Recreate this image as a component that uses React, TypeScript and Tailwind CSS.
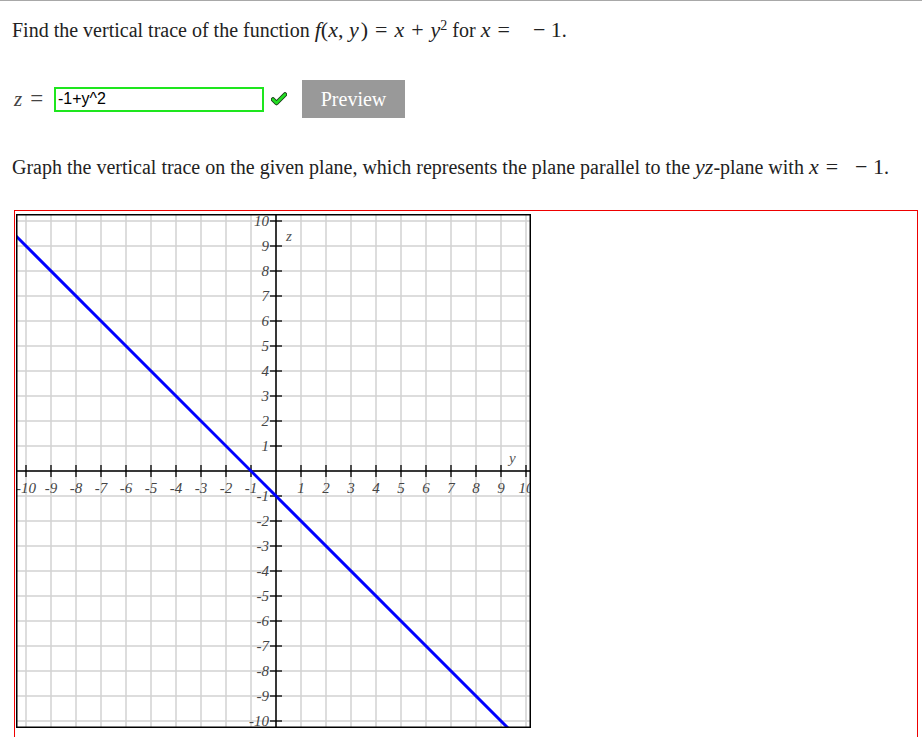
import React from 'react'

const serif = { fontFamily: '"Liberation Serif", "Times New Roman", serif' }

const U = 25
const OX = 260
const OY = 257
const W = 515
const H = 514

const range = Array.from({ length: 21 }, (_, i) => i - 10)

function Graph() {
  return (
    <svg width={W} height={H} viewBox={`0 0 ${W} ${H}`} className="block" style={serif}>
      <rect x="0" y="0" width={W} height={H} fill="white" />
      {range.map((u) => (
        <line key={'gx' + u} x1={OX + u * U} y1="0" x2={OX + u * U} y2={H} stroke="#d2d2d2" strokeWidth="1.5" />
      ))}
      {range.map((v) => (
        <line key={'gy' + v} x1="0" y1={OY - v * U} x2={W} y2={OY - v * U} stroke="#d2d2d2" strokeWidth="1.5" />
      ))}
      <line x1="0" y1={OY} x2={W} y2={OY} stroke="black" strokeWidth="1.5" />
      <line x1={OX} y1="0" x2={OX} y2={H} stroke="black" strokeWidth="1.5" />
      {range
        .filter((n) => n !== 0)
        .map((n) => (
          <g key={'t' + n}>
            <line x1={OX + n * U} y1={OY - 6} x2={OX + n * U} y2={OY + 6} stroke="black" strokeWidth="1.3" />
            <line x1={OX - 6} y1={OY - n * U} x2={OX + 6} y2={OY - n * U} stroke="black" strokeWidth="1.3" />
            <text x={OX + n * U} y={OY + 22} fontSize="15" fontStyle="italic" fill="#444" textAnchor="middle">
              {n}
            </text>
            <text x={OX - 7} y={OY - n * U + 5} fontSize="15" fontStyle="italic" fill="#444" textAnchor="end">
              {n}
            </text>
          </g>
        ))}
      <text x={OX + 10} y="27" fontSize="15" fontStyle="italic" fill="#555">z</text>
      <text x={OX + 233} y={OY - 8} fontSize="15" fontStyle="italic" fill="#555">y</text>
      <line x1="0" y1={OY - 9.4 * U} x2={OX + 9.28 * U} y2={H} stroke="#0000ff" strokeWidth="3" />
      <rect x="0.75" y="0.75" width={W - 1.5} height={H - 1.5} fill="none" stroke="black" strokeWidth="1.5" />
    </svg>
  )
}

function Math({ children }: { children: React.ReactNode }) {
  return <span className="text-[22px]">{children}</span>
}

function M({ children }: { children: React.ReactNode }) {
  return <span className="italic">{children}</span>
}

function Op({ children }: { children: React.ReactNode }) {
  return <span className="mx-[7px]">{children}</span>
}

export default function App() {
  return (
    <div className="h-[737px] w-full overflow-hidden border-t border-[#a8a8a8] bg-white text-[#222]" style={serif}>
      <div className="px-[12px]">
        <p className="pt-[17px] text-[20px] leading-[24px]">
          Find the vertical trace of the function{' '}
          <Math>
            <M>f</M>(<M>x</M>,&nbsp;<M>y</M>
            <span className="ml-[2px]">)</span>
            <Op>=</Op>
            <M>x</M>
            <Op>+</Op>
            <M>y</M>
            <sup className="text-[14px]">2</sup>
          </Math>{' '}
          for{' '}
          <Math>
            <M>x</M>
            <Op>=</Op>
            <span className="ml-[16px]">−&nbsp;1</span>
          </Math>
          .
        </p>

        <div className="mt-[38px] flex items-center">
          <span className="ml-[2px] w-[40px] text-[21px] leading-[24px] text-[#444]">
            <M>z</M>
            <span className="ml-[8px] text-[23px]">=</span>
          </span>
          <input
            readOnly
            value="-1+y^2"
            className="h-[25px] w-[210px] border-2 border-[#1ee61e] px-[2px] text-[16px] text-black outline-none"
            style={{ fontFamily: '"Liberation Sans", Arial, sans-serif' }}
          />
          <svg width="16" height="14" viewBox="0 0 16 14" className="ml-[7px]">
            <path d="M2 7.5 L5.5 11 L14 2.5" fill="none" stroke="#1a3a1a" strokeWidth="4.5" strokeLinecap="round" strokeLinejoin="round" />
            <path d="M2 7.5 L5.5 11 L14 2.5" fill="none" stroke="#22dd22" strokeWidth="2.6" strokeLinecap="round" strokeLinejoin="round" />
          </svg>
          <button className="ml-[15px] flex h-[38px] w-[103px] items-center justify-center bg-[#999] text-[20px] text-white">
            Preview
          </button>
        </div>

        <p className="mt-[37px] text-[20px] leading-[24px]">
          Graph the vertical trace on the given plane, which represents the plane parallel to the{' '}
          <Math>
            <M>yz</M>
          </Math>
          -plane with{' '}
          <Math>
            <M>x</M>
            <Op>=</Op>
            <span className="ml-[10px]">−&nbsp;1</span>
          </Math>
          .
        </p>
      </div>

      <div className="mt-[31px] ml-[14px] mr-[4px] h-[600px] border border-[#ee0000] pt-[3px] pl-[1px]">
        <Graph />
      </div>
    </div>
  )
}
